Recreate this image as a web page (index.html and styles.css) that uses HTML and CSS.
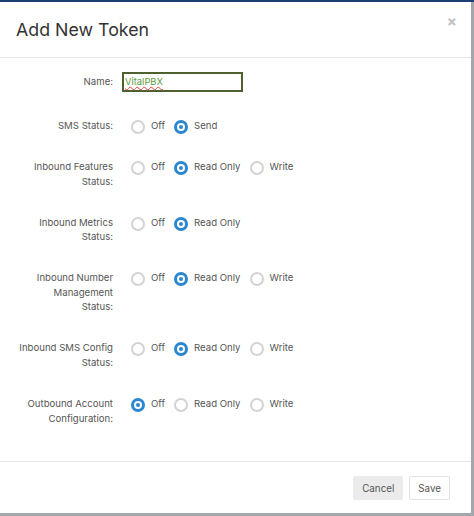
FILE: index.html
```html
<!DOCTYPE html>
<html>
<head>
<meta charset="utf-8">
<link rel="stylesheet" href="styles.css">
</head>
<body>
<div class="topbar"></div>
<div class="modal">
  <div class="modal-header">
    <h2 class="modal-title">Add New Token</h2>
    <span class="close">×</span>
  </div>
  <div class="modal-body">
    <div class="row row-name">
      <div class="label label-name">Name:</div>
      <div class="control">
        <div class="text-input"><span class="misspelt">VitalPBX</span></div>
      </div>
    </div>
    <div class="row">
      <div class="label">SMS Status:</div>
      <div class="control">
        <span class="opt"><span class="radio"></span>Off</span>
        <span class="opt"><span class="radio checked"></span>Send</span>
      </div>
    </div>
    <div class="row">
      <div class="label">Inbound Features<br>Status:</div>
      <div class="control">
        <span class="opt"><span class="radio"></span>Off</span>
        <span class="opt"><span class="radio checked"></span>Read Only</span>
        <span class="opt"><span class="radio"></span>Write</span>
      </div>
    </div>
    <div class="row">
      <div class="label">Inbound Metrics<br>Status:</div>
      <div class="control">
        <span class="opt"><span class="radio"></span>Off</span>
        <span class="opt"><span class="radio checked"></span>Read Only</span>
      </div>
    </div>
    <div class="row">
      <div class="label">Inbound Number<br>Management<br>Status:</div>
      <div class="control">
        <span class="opt"><span class="radio"></span>Off</span>
        <span class="opt"><span class="radio checked"></span>Read Only</span>
        <span class="opt"><span class="radio"></span>Write</span>
      </div>
    </div>
    <div class="row">
      <div class="label">Inbound SMS Config<br>Status:</div>
      <div class="control">
        <span class="opt"><span class="radio"></span>Off</span>
        <span class="opt"><span class="radio checked"></span>Read Only</span>
        <span class="opt"><span class="radio"></span>Write</span>
      </div>
    </div>
    <div class="row">
      <div class="label">Outbound Account<br>Configuration:</div>
      <div class="control">
        <span class="opt"><span class="radio checked"></span>Off</span>
        <span class="opt"><span class="radio"></span>Read Only</span>
        <span class="opt"><span class="radio"></span>Write</span>
      </div>
    </div>
  </div>
  <div class="modal-footer">
    <button class="btn btn-cancel">Cancel</button>
    <button class="btn btn-save">Save</button>
  </div>
</div>
</body>
</html>
```
FILE: styles.css
```css
html, body {
  margin: 0;
  padding: 0;
}
body {
  width: 474px;
  height: 516px;
  background: #a3a6ab;
  font-family: Inter, "Noto Sans", sans-serif;
  color: #555;
  overflow: hidden;
}
.topbar {
  height: 2px;
  background: #1d3e73;
}
.modal {
  width: 471px;
  height: 511px;
  background: #fff;
  display: flex;
  flex-direction: column;
}
.modal-header {
  height: 56px;
  border-bottom: 1px solid #e6e6e6;
  display: flex;
  justify-content: space-between;
  align-items: flex-start;
  padding: 0 14px 0 16px;
  box-sizing: border-box;
}
.modal-title {
  margin: 16px 0 0;
  font-weight: 400;
  font-size: 17.8px;
  line-height: 24px;
  color: #333;
}
.close {
  margin-top: 12px;
  font-size: 15px;
  line-height: 16px;
  color: #c2c2c2;
  font-weight: 700;
}
.modal-body {
  flex: 1;
  padding: 14px 0 0;
  display: flex;
  flex-direction: column;
  gap: 26.6px;
}
.row {
  display: grid;
  grid-template-columns: 113px auto;
  column-gap: 18px;
  align-items: start;
}
.row-name {
  margin-bottom: 0.5px;
}
.label {
  text-align: right;
  font-size: 9.6px;
  line-height: 14.5px;
  color: #555;
}
.label-name {
  line-height: 20px;
}
.control {
  display: flex;
  align-items: flex-start;
  font-size: 9.6px;
  line-height: 14.5px;
}
.text-input {
  margin-left: -9px;
  width: 121px;
  height: 20px;
  box-sizing: border-box;
  border: 2px solid #4f6131;
  padding: 0 1px;
  font-size: 9.4px;
  line-height: 16px;
  color: #5d9a3e;
}
.misspelt {
  text-decoration: underline wavy #e0413a;
  text-decoration-thickness: 1px;
  text-underline-offset: 1px;
}
.opt {
  display: flex;
  align-items: center;
  gap: 6px;
  margin-right: 9px;
  height: 14.5px;
}
.radio {
  width: 14px;
  height: 14px;
  box-sizing: border-box;
  border-radius: 50%;
  border: 2px solid #d3d3d3;
  position: relative;
  flex: none;
  margin-top: 1px;
}
.radio.checked {
  border: 3px solid #2a87d0;
}
.radio.checked::after {
  content: "";
  position: absolute;
  left: 2px;
  top: 2px;
  width: 4px;
  height: 4px;
  border-radius: 50%;
  background: #2a87d0;
}
.modal-footer {
  border-top: 1px solid #e6e6e6;
  display: flex;
  justify-content: flex-end;
  gap: 6px;
  padding: 14px 21px 13px 0;
}
.btn {
  font-family: inherit;
  font-size: 9.8px;
  color: #555;
  height: 24px;
  padding: 0 8px;
  border-radius: 2px;
  cursor: pointer;
}
.btn-cancel {
  background: #ebebeb;
  border: 1px solid #ebebeb;
}
.btn-save {
  background: #fff;
  border: 1px solid #e3e3e3;
}
```
